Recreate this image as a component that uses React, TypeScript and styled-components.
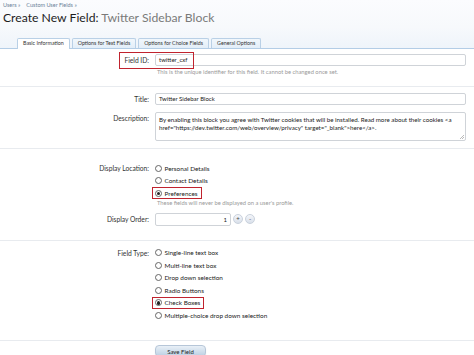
import React from "react";
import styled, { createGlobalStyle } from "styled-components";

const GlobalStyle = createGlobalStyle`
  html, body { margin: 0; padding: 0; background: #fff; }
  * { box-sizing: border-box; }
`;

const Page = styled.div`
  width: 474px;
  height: 355px;
  overflow: hidden;
  background: #fff;
  font-family: Lato, "Liberation Sans", sans-serif;
  font-size: 6.7px;
  color: #333;
`;

const Header = styled.div`
  background: linear-gradient(#fbfcfe 0%, #f7f9fc 55%, #eef4fa 100%);
  padding: 1px 0 0 0;
`;

const Breadcrumb = styled.div`
  padding-left: 3px;
  font-size: 5.5px;
  line-height: 8px;
  color: #6a7f98;
  display: flex;
  gap: 6px;
`;

const Title = styled.h1`
  margin: 1px 0 0 3px;
  font-size: 12.2px;
  line-height: 16px;
  font-weight: 400;
  color: #1d1d1d;
  span { color: #7a7a7a; }
`;

const TabBar = styled.div`
  margin-top: 12px;
  padding-left: 17px;
  display: flex;
  gap: 2px;
  border-bottom: 1px solid #b3cde6;
`;

const Tab = styled.div<{ $active?: boolean }>`
  line-height: 9px;
  padding: 0 5px;
  font-size: 5.3px;
  color: #333;
  border: 1px solid #b9d0e6;
  border-bottom: none;
  border-radius: 2px 2px 0 0;
  background: ${(p) => (p.$active ? "#fff" : "linear-gradient(#f1f7fc, #e3eef8)")};
  margin-bottom: ${(p) => (p.$active ? "-1px" : "0")};
  height: ${(p) => (p.$active ? "11px" : "10px")};
`;

const Section = styled.div<{ $top: number; $bottom: number; $line?: boolean }>`
  padding: ${(p) => p.$top}px 8px ${(p) => p.$bottom}px 0;
  border-top: ${(p) => (p.$line ? "1px solid #e8ebef" : "none")};
  display: flex;
  flex-direction: column;
  gap: 7px;
`;

const Row = styled.div`
  position: relative;
  display: grid;
  grid-template-columns: 149px 1fr;
  column-gap: 6px;
  align-items: start;
`;

const Label = styled.div<{ $h?: number }>`
  text-align: right;
  line-height: ${(p) => p.$h ?? 12}px;
  color: #333;
`;

const Control = styled.div`
  display: flex;
  flex-direction: column;
`;

const TextInput = styled.div`
  height: 12px;
  line-height: 10px;
  padding: 0 3px;
  border: 1px solid #cfd3d8;
  border-radius: 2px;
  background: #fff;
  font-size: 6px;
  color: #222;
`;

const TextArea = styled.div`
  position: relative;
  height: 29px;
  padding: 3px 3px;
  border: 1px solid #cfd3d8;
  border-radius: 2px;
  background: #fff;
  font-size: 6.2px;
  line-height: 8px;
  color: #222;
  &::after {
    content: "";
    position: absolute;
    right: 1px;
    bottom: 1px;
    width: 4px;
    height: 4px;
    background: linear-gradient(135deg, transparent 45%, #bbb 45%, #bbb 55%, transparent 55%, transparent 70%, #bbb 70%, #bbb 80%, transparent 80%);
  }
`;

const Hint = styled.div<{ $mt?: number }>`
  margin-top: ${(p) => p.$mt ?? 3}px;
  padding-left: 2px;
  font-size: 5.8px;
  line-height: 6px;
  color: #9a9a9a;
`;

const FieldIdMark = styled.div`
  position: absolute;
  left: 119px;
  top: -2px;
  width: 75px;
  height: 17px;
  border: 1.5px solid #c0232e;
  pointer-events: none;
`;

const Options = styled.div`
  display: flex;
  flex-direction: column;
`;

const Option = styled.label`
  display: flex;
  align-items: center;
  height: 12.5px;
  font-size: 6.4px;
  color: #222;
`;

const OptionInner = styled.span<{ $mark?: boolean }>`
  position: relative;
  display: inline-flex;
  align-items: center;
  gap: 2.5px;
  &::before {
    content: "";
    display: ${(p) => (p.$mark ? "block" : "none")};
    position: absolute;
    left: -3px;
    top: -2.5px;
    right: -4px;
    bottom: -2.5px;
    border: 1.5px solid #c0232e;
    pointer-events: none;
  }
`;

const Radio = styled.span<{ $on?: boolean }>`
  width: 7px;
  height: 7px;
  border-radius: 50%;
  border: 0.8px solid #666;
  background: #fff;
  display: inline-flex;
  align-items: center;
  justify-content: center;
  &::after {
    content: "";
    width: 3.5px;
    height: 3.5px;
    border-radius: 50%;
    background: ${(p) => (p.$on ? "#222" : "transparent")};
  }
`;

const SpinRow = styled.div`
  display: flex;
  align-items: center;
  gap: 2px;
`;

const NumberBox = styled.div`
  width: 76px;
  height: 13px;
  line-height: 11px;
  padding: 0 3px;
  text-align: right;
  border: 1px solid #cfd3d8;
  border-radius: 2px;
  font-size: 6px;
  color: #222;
`;

const SpinButton = styled.div`
  width: 10px;
  height: 10px;
  border-radius: 50%;
  background: linear-gradient(#f4f6fa, #d9e0ea);
  border: 0.5px solid #c9d1dc;
  display: flex;
  align-items: center;
  justify-content: center;
  font-size: 6px;
  color: #444;
  line-height: 1;
`;

const SaveButton = styled.div`
  width: 51px;
  height: 12px;
  line-height: 12px;
  text-align: center;
  border-radius: 4px;
  background: linear-gradient(#e9f0f7, #bcd0e3);
  border: 0.5px solid #b6c6d8;
  box-shadow: 0 1px 1px rgba(0, 0, 0, 0.15);
  font-size: 6px;
  color: #222;
`;

function Choice({ label, on, mark }: { label: string; on?: boolean; mark?: boolean }) {
  return (
    <Option>
      <OptionInner $mark={mark}>
        <Radio $on={on} />
        {label}
      </OptionInner>
    </Option>
  );
}

export default function App() {
  return (
    <Page>
      <GlobalStyle />
      <Header>
        <Breadcrumb>
          <span>Users »</span>
          <span>Custom User Fields »</span>
        </Breadcrumb>
        <Title>
          Create New Field: <span>Twitter Sidebar Block</span>
        </Title>
        <TabBar>
          <Tab $active>Basic Information</Tab>
          <Tab>Options for Text Fields</Tab>
          <Tab>Options for Choice Fields</Tab>
          <Tab>General Options</Tab>
        </TabBar>
      </Header>

      <Section $top={5} $bottom={11}>
        <Row>
          <Label>Field ID:</Label>
          <Control>
            <TextInput>twitter_cxf</TextInput>
            <Hint>This is the unique identifier for this field. It cannot be changed once set.</Hint>
          </Control>
          <FieldIdMark />
        </Row>
      </Section>

      <Section $line $top={6} $bottom={7}>
        <Row>
          <Label>Title:</Label>
          <TextInput>Twitter Sidebar Block</TextInput>
        </Row>
        <Row>
          <Label>Description:</Label>
          <TextArea>
            By enabling this block you agree with Twitter cookies that will be installed. Read more about their cookies &lt;a
            href="https://dev.twitter.com/web/overview/privacy" target="_blank"&gt;here&lt;/a&gt;.
          </TextArea>
        </Row>
      </Section>

      <Section $line $top={13} $bottom={14}>
        <Row>
          <Label $h={12.5}>Display Location:</Label>
          <Control>
            <Options>
              <Choice label="Personal Details" />
              <Choice label="Contact Details" />
              <Choice label="Preferences" on mark />
            </Options>
            <Hint $mt={0}>These fields will never be displayed on a user's profile.</Hint>
          </Control>
        </Row>
        <Row>
          <Label $h={13}>Display Order:</Label>
          <SpinRow>
            <NumberBox>1</NumberBox>
            <SpinButton>+</SpinButton>
            <SpinButton>-</SpinButton>
          </SpinRow>
        </Row>
      </Section>

      <Section $line $top={6} $bottom={18}>
        <Row>
          <Label $h={12.5}>Field Type:</Label>
          <Options>
            <Choice label="Single-line text box" />
            <Choice label="Multi-line text box" />
            <Choice label="Drop down selection" />
            <Choice label="Radio Buttons" />
            <Choice label="Check Boxes" on mark />
            <Choice label="Multiple-choice drop down selection" />
          </Options>
        </Row>
      </Section>

      <Section $line $top={4} $bottom={0}>
        <Row>
          <span />
          <SaveButton>Save Field</SaveButton>
        </Row>
      </Section>
    </Page>
  );
}
